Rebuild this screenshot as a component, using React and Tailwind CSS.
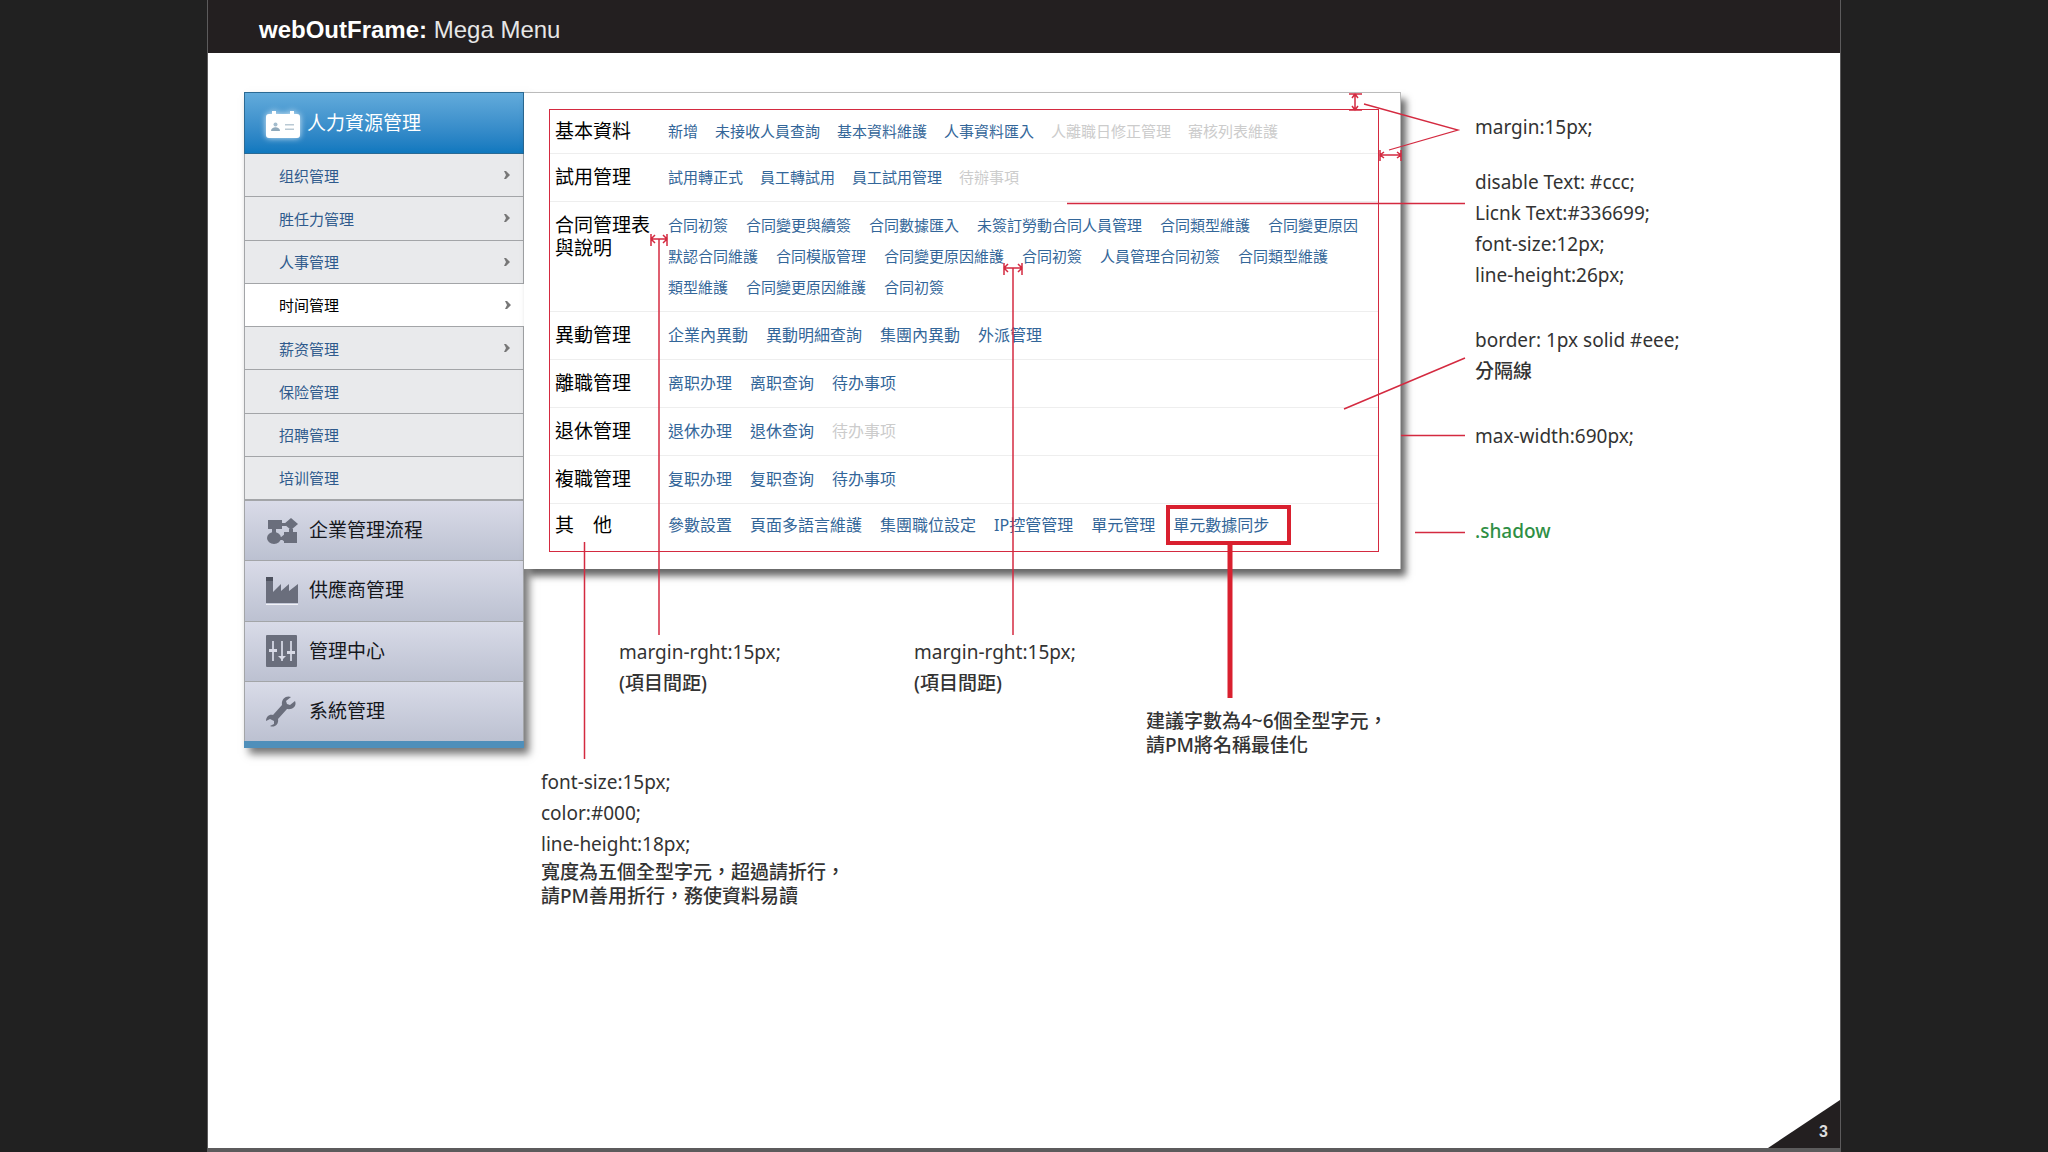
import React, { useState } from "react";

const SUB_ITEMS = [
  { label: "组织管理", more: true },
  { label: "胜任力管理", more: true },
  { label: "人事管理", more: true },
  { label: "时间管理", more: true },
  { label: "薪资管理", more: true },
  { label: "保险管理" },
  { label: "招聘管理" },
  { label: "培训管理" },
];

// each section holds one or more lines of links, "off" marks disabled ones
const SECTIONS = [
  {
    title: "基本資料",
    lines: [["新增", "未接收人員查詢", "基本資料維護", "人事資料匯入", "人離職日修正管理", "審核列表維護"]],
    off: ["人離職日修正管理", "審核列表維護"],
    row: "py-1.5",
    links: "gap-x-[17px] text-[15px]",
  },
  {
    title: "試用管理",
    lines: [["試用轉正式", "員工轉試用", "員工試用管理", "待辦事項"]],
    off: ["待辦事項"],
    row: "py-2",
    links: "gap-x-[17px] text-[15px]",
  },
  {
    title: "合同管理表與說明",
    lines: [
      ["合同初簽", "合同變更與續簽", "合同數據匯入", "未簽訂勞動合同人員管理", "合同類型維護", "合同變更原因"],
      ["默認合同維護", "合同模版管理", "合同變更原因維護", "合同初簽", "人員管理合同初簽", "合同類型維護"],
      ["類型維護", "合同變更原因維護", "合同初簽"],
    ],
    off: [],
    row: "py-2",
    links: "gap-x-[18px] text-[15px]",
  },
  {
    title: "異動管理",
    lines: [["企業內異動", "異動明細查詢", "集團內異動", "外派管理"]],
    off: [],
    row: "py-2",
    links: "gap-x-[18px] text-[16px]",
  },
  {
    title: "離職管理",
    lines: [["离职办理", "离职查询", "待办事项"]],
    off: [],
    row: "py-2",
    links: "gap-x-[18px] text-[16px]",
  },
  {
    title: "退休管理",
    lines: [["退休办理", "退休查询", "待办事项"]],
    off: ["待办事项"],
    row: "py-2",
    links: "gap-x-[18px] text-[16px]",
  },
  {
    title: "複職管理",
    lines: [["复职办理", "复职查询", "待办事项"]],
    off: [],
    row: "py-2",
    links: "gap-x-[18px] text-[16px]",
  },
  {
    title: "其　他",
    lines: [["參數設置", "頁面多語言維護", "集團職位設定", "IP控管管理", "單元管理", "單元數據同步"]],
    off: [],
    row: "pt-1.5 pb-2.5",
    links: "gap-x-[18px] text-[16px]",
  },
];

const CardIcon = () => (
  <svg viewBox="0 0 36 30" className="mt-1 h-[30px] w-9 drop-shadow-[0_0_3px_rgba(255,255,255,0.8)]" aria-hidden="true">
    <path d="M7 1h4v4H7zM25 1h4v4h-4z" fill="#fff" />
    <rect x="1" y="4" width="34" height="24" rx="3" fill="#fff" />
    <circle cx="10.5" cy="14.5" r="2" fill="#a3bccd" />
    <path d="M6 21c0-5 9-5 9 0z" fill="#8fa9bb" />
    <path d="M20 14h9v1.500h-9zM20 18.500h9v1.500h-9z" fill="#b9c9d4" />
  </svg>
);

const FlowIcon = () => (
  <svg viewBox="0 0 32 28" className="h-7 w-8" fill="#6a6e7c" aria-hidden="true">
    <path d="M2 3h14v9H2z" />
    <path d="M25 1l7 6-7 6-7-6z" />
    <path d="M14 6h6v3h-6zM23 12h4v5h-4zM6 11h4v6H6zM13 20h6v3h-6z" />
    <path d="M14 21l6-5v10z" />
    <ellipse cx="8" cy="21" rx="7" ry="6" />
    <path d="M18 15h13v11H18z" />
  </svg>
);

const FactoryIcon = () => (
  <svg viewBox="0 0 32 28" className="h-7 w-8" aria-hidden="true">
    <path d="M0 27h32v1H0z" fill="#f1f2f7" />
    <path d="M0 0h7v15l8-8v7l8-7v7l9-7v19H0z" fill="#6a6e7c" />
    <path d="M0 0h7v4H0z" fill="#4d515e" />
  </svg>
);

const SlidersIcon = () => (
  <svg viewBox="0 0 32 32" className="size-8" aria-hidden="true">
    <rect x="0" y="0" width="31" height="32" rx="1" fill="#6a6e7c" />
    <path d="M7 6v20M16 6v20M25 6v20" stroke="#c9ccd9" strokeWidth="2" />
    <path d="M3 14h8v3H3zM12 21h8l-4 4zM21 16h8v3h-8z" fill="#d8dae6" />
  </svg>
);

const WrenchIcon = () => (
  <svg viewBox="0 0 32 32" className="size-8" aria-hidden="true">
    <path
      d="M29 6l-5 4-3-1-1-3 5-4c-5-2-10 2-9 8L7 20c-4-1-7 2-7 6l4-2 4 2 0 3-4 2c5 2 9-2 8-7l9-10c6 1 10-3 8-8z"
      fill="#6a6e7c"
    />
  </svg>
);

const CATEGORIES = [
  { label: "企業管理流程", Icon: FlowIcon },
  { label: "供應商管理", Icon: FactoryIcon },
  { label: "管理中心", Icon: SlidersIcon },
  { label: "系統管理", Icon: WrenchIcon },
];

const SideNav = () => {
  const [active, setActive] = useState("时间管理");

  return (
    <nav className="w-[280px] shrink-0 self-start border-b-[7px] border-[#4f8fba] shadow-[5px_6px_8px_rgba(0,0,0,0.55)]">
      <button
        type="button"
        className="flex h-[62px] w-full items-center gap-1.5 border border-[#2b6a94] bg-linear-to-b from-[#62abdb] to-[#0e78be] pl-5 text-[19px] text-white"
      >
        <CardIcon />
        人力資源管理
      </button>
      <ul className="grid h-[346px] grid-rows-8" lang="zh-Hans">
        {SUB_ITEMS.map(({ label, more }) => (
          <li key={label} className="flex">
            <a
              href="#"
              onClick={() => setActive(label)}
              className={`flex w-full items-center justify-between border-b border-l border-[#a3a5a8] pr-3 pl-[34px] font-['Noto_Sans_CJK_SC',sans-serif] text-[15px] ${
                active === label ? "bg-white text-black" : "border-r bg-[#e9eaec] text-[#2f5a8c]"
              }`}
            >
              {label}
              {more && (
                <svg viewBox="0 0 8 8" className="size-2" fill="#777" aria-hidden="true">
                  <path d="M1 0h2l4 4-4 4H1l2-4z" />
                </svg>
              )}
            </a>
          </li>
        ))}
      </ul>
      <div className="grid h-[241px] grid-rows-4">
        {CATEGORIES.map(({ label, Icon }) => (
          <button
            key={label}
            type="button"
            className="flex items-center gap-[11px] border-x border-t border-x-[#a3a5a8] border-t-[#a3a5a8] bg-linear-to-b from-[#d9dbe8] to-[#bcc1d1] pl-[21px] text-[19px] text-[#15171c]"
          >
            <Icon />
            {label}
          </button>
        ))}
      </div>
    </nav>
  );
};

const MenuSection = ({ title, lines, off, row, links }) => (
  <section className={`flex border-b border-[#eee] pl-[5px] last:border-b-0 ${row}`}>
    <h3 className="mt-1 w-[113px] shrink-0 pr-4 text-[19px] leading-[23px] text-black">{title}</h3>
    <div className="leading-[31px]">
      {lines.map((line, i) => (
        <ul key={i} className={`flex whitespace-nowrap ${links}`}>
          {line.map((text) => (
            <li key={text}>
              {off.includes(text) ? (
                <span className="text-[#ccc]">{text}</span>
              ) : (
                <a href="#" className="text-[#336699] hover:underline">
                  {text}
                </a>
              )}
            </li>
          ))}
        </ul>
      ))}
    </div>
  </section>
);

// callout lines, drawn from the top left corner of the menu panel
const Callouts = () => (
  <svg
    className="pointer-events-none absolute top-0 left-0 h-[670px] w-[950px] overflow-visible"
    viewBox="0 0 950 670"
    fill="none"
    stroke="#d42a40"
    strokeWidth="2"
    aria-hidden="true"
  >
    {/* outer margin */}
    <path d="M825 1h13M825 17h13M831 1v16M828 5l3-4 3 4M828 13l3 4 3-4" strokeWidth="1.5" />
    <path d="M856 57v11M877 57v11M856 62h21M860 59l-4 3 4 3M873 59l4 3-4 3" strokeWidth="1.5" />
    <path d="M840 11l94 26-69 20" strokeWidth="1.3" />
    {/* item spacing */}
    <path d="M127 141v12M143 141v12M127 146h16M131 142l-4 4 4 4M139 142l4 4-4 4" strokeWidth="1.5" />
    <path d="M135 146v396" strokeWidth="1.5" />
    <path d="M480 170v12M498 170v12M480 175h18M484 171l-4 4 4 4M494 171l4 4-4 4" strokeWidth="1.5" />
    <path d="M489 175v367" strokeWidth="1.5" />
    {/* link text, separator, width, shadow, title */}
    <path d="M543 110.500h398M820 316l121-51M877 342.500h64M891 439.500h50M60.500 449v217" strokeWidth="1.5" />
    {/* name length */}
    <path d="M644 414h121v36H644z" stroke="#d9202f" strokeWidth="4" />
    <path d="M706 450v155" stroke="#d9202f" strokeWidth="5" />
  </svg>
);

const Notes = () => (
  <aside className="shrink-0 pt-5 pl-[74px]">
    <p>margin:15px;</p>
    <div className="mt-6">
      <p>disable Text: #ccc;</p>
      <p>Licnk Text:#336699;</p>
      <p>font-size:12px;</p>
      <p>line-height:26px;</p>
    </div>
    <div className="mt-[34px]">
      <p>border: 1px solid #eee;</p>
      <p className="font-medium">分隔線</p>
    </div>
    <p className="mt-[34px]">max-width:690px;</p>
    <p className="mt-16 font-medium text-[#2f8f45]">.shadow</p>
  </aside>
);

const SpacingNote = ({ className }) => (
  <div className={className}>
    <p>margin-rght:15px;</p>
    <p className="font-medium">(項目間距)</p>
  </div>
);

const App = () => (
  <div className="min-h-screen bg-[#212121]">
    <div
      lang="zh-Hant"
      className="relative mx-auto flex min-h-screen w-4/5 max-w-[1634px] flex-col border-x border-b-4 border-[#5c5b5c] bg-white font-['Noto_Sans','Noto_Sans_CJK_TC',sans-serif]"
    >
      <header className="flex h-[53px] items-center bg-[#231f20] px-[51px] pt-1.5 font-['Liberation_Sans',Arial,sans-serif] text-2xl text-[#e6e6e6]">
        <h1>
          <b className="text-white">webOutFrame:</b> Mega Menu
        </h1>
      </header>

      <main className="flex pt-[39px] pl-9 text-[19px] leading-[31px] text-[#333]">
        <SideNav />
        <div className="w-full max-w-[877px]">
          <div className="relative z-10 border-t border-r border-[#bbb] bg-white pt-4 pr-[21px] pb-[17px] pl-[25px] shadow-[5px_7px_7px_rgba(0,0,0,0.6)]">
            <div className="border border-[#d42a40]">
              {SECTIONS.map((s) => (
                <MenuSection key={s.title} {...s} />
              ))}
            </div>
            <Callouts />
          </div>

          <div className="mt-[68px] flex pl-[95px]">
            <SpacingNote className="w-[295px]" />
            <SpacingNote className="w-[232px]" />
            <p className="mt-[72px] leading-6 font-medium whitespace-nowrap">
              建議字數為4~6個全型字元，
              <br />
              請PM將名稱最佳化
            </p>
          </div>
          <div className="mt-2.5 pl-[17px]">
            <p>font-size:15px;</p>
            <p>color:#000;</p>
            <p>line-height:18px;</p>
            <p className="leading-6 font-medium">
              寬度為五個全型字元，超過請折行，
              <br />
              請PM善用折行，務使資料易讀
            </p>
          </div>
        </div>
        <Notes />
      </main>

      <footer className="relative mt-auto ml-auto h-12 w-[72px]">
        <svg viewBox="0 0 72 48" className="absolute inset-0 size-full" aria-hidden="true">
          <path d="M0 48L72 0v48z" fill="#231f20" />
        </svg>
        <span className="relative flex h-full items-end justify-end pr-3 pb-1 font-['Liberation_Sans',Arial,sans-serif] text-base leading-6 font-bold text-[#ddd]">
          3
        </span>
      </footer>
    </div>
  </div>
);

export default App;
